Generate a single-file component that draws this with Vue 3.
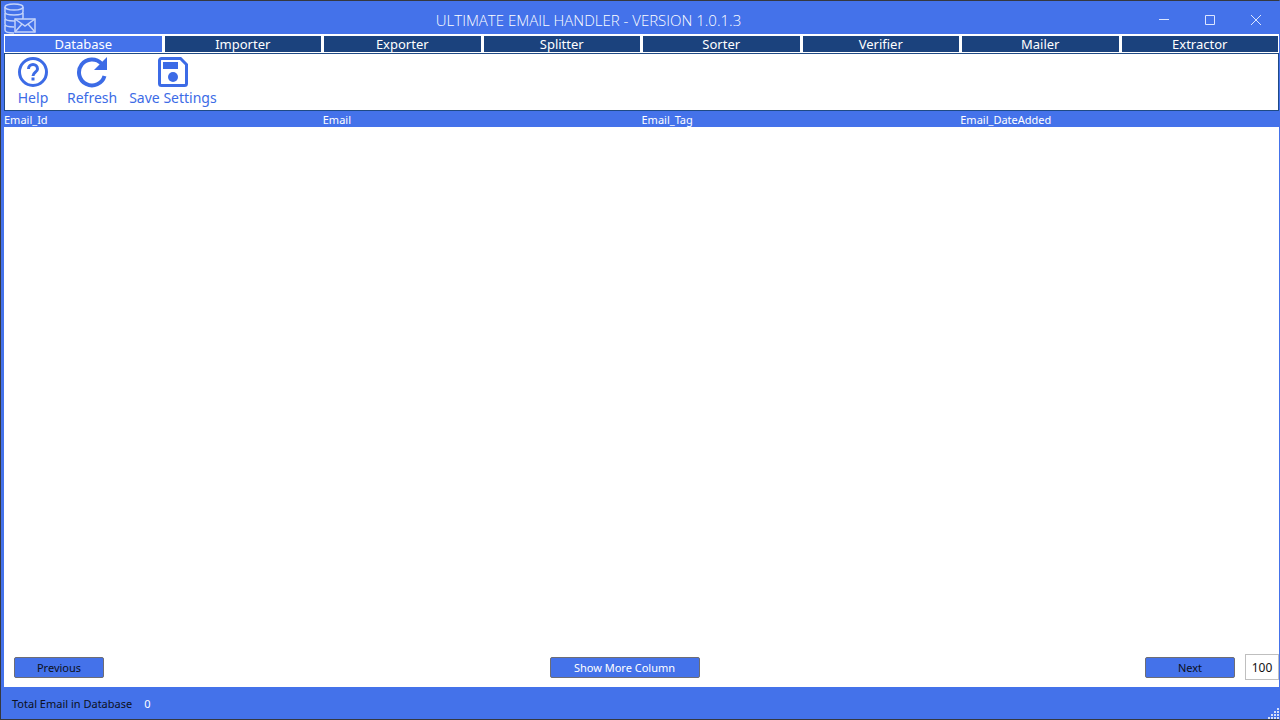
<template>
  <main class="window">
    <header class="title-bar">
      <svg class="app-logo" viewBox="0 0 32 32" aria-hidden="true">
        <ellipse cx="10" cy="5" rx="9" ry="3" />
        <path d="M1 5v5c0 4 18 4 18 0V5M1 11v5c0 4 18 4 18 0v-5M1 17v5c0 2 4 3 9 3M1 23v5c0 2 4 3 9 3" />
        <path class="envelope" d="M11 17h20v13H11z" />
        <path d="M11 17l10 7 10-7M11 30l7-8M31 30l-7-8" />
      </svg>
      <h1>ULTIMATE EMAIL HANDLER - VERSION 1.0.1.3</h1>
      <div class="window-buttons">
        <button type="button" aria-label="Minimize">
          <svg viewBox="0 0 12 12"><path d="M1 5.500h10" /></svg>
        </button>
        <button type="button" aria-label="Maximize">
          <svg viewBox="0 0 12 12"><path d="M1.500 1.500h9v9h-9z" /></svg>
        </button>
        <button type="button" aria-label="Close">
          <svg viewBox="0 0 12 12"><path d="M1 1l10 10M11 1L1 11" /></svg>
        </button>
      </div>
    </header>

    <nav class="tabs" aria-label="Sections">
      <button
        v-for="tab in tabs"
        :key="tab"
        type="button"
        :class="{ active: tab === activeTab }"
        @click="activeTab = tab"
      >
        {{ tab }}
      </button>
    </nav>

    <div class="toolbar">
      <button type="button">
        <svg viewBox="0 0 32 32" aria-hidden="true">
          <circle class="stroke" cx="16" cy="16" r="13.500" />
          <path class="stroke" d="M11.500 13c0-6 9-6 9 0 0 3-4.500 3.500-4.500 7" />
          <rect x="14.500" y="21.500" width="3" height="3" />
        </svg>
        <span>Help</span>
      </button>
      <button type="button">
        <svg viewBox="0 0 32 32" aria-hidden="true">
          <path class="stroke thick" d="M25.500 7.500A13 13 0 1 0 28.500 20" />
          <path d="M31 1v13H18z" />
        </svg>
        <span>Refresh</span>
      </button>
      <button type="button">
        <svg viewBox="0 0 32 32" aria-hidden="true">
          <path class="stroke" d="M4.500 2.500h19l6 6v19a2 2 0 0 1-2 2h-23a2 2 0 0 1-2-2v-23a2 2 0 0 1 2-2z" />
          <rect x="6" y="6" width="15" height="7" />
          <circle cx="16" cy="21" r="5" />
        </svg>
        <span>Save Settings</span>
      </button>
    </div>

    <section class="content" aria-label="Emails">
      <table>
        <thead>
          <tr>
            <th v-for="column in columns" :key="column" scope="col">{{ column }}</th>
          </tr>
        </thead>
        <tbody></tbody>
      </table>

      <div class="pager">
        <div class="pager-buttons">
          <button type="button">Previous</button>
          <button type="button" class="more">Show More Column</button>
          <button type="button">Next</button>
        </div>
        <input v-model="pageSize" type="text" aria-label="Rows per page" />
      </div>
    </section>

    <footer class="status-bar">
      <span>Total Email in Database</span>
      <output>{{ total }}</output>
      <svg class="grip" viewBox="0 0 11 11" aria-hidden="true">
        <rect v-for="dot in gripDots" :key="dot.id" :x="dot.x" :y="dot.y" width="2" height="2" />
      </svg>
    </footer>
  </main>
</template>

<script setup>
import { ref } from 'vue'

const tabs = ['Database', 'Importer', 'Exporter', 'Splitter', 'Sorter', 'Verifier', 'Mailer', 'Extractor']
const columns = ['Email_Id', 'Email', 'Email_Tag', 'Email_DateAdded']

const activeTab = ref('Database')
const pageSize = ref('100')
const total = ref(0)

// triangle of dots, one more on each row down
const gripDots = []
for (let row = 0; row < 4; row++) {
  for (let col = 3 - row; col < 4; col++) {
    gripDots.push({ id: `${row}-${col}`, x: col * 3, y: row * 3 })
  }
}
</script>

<style>
body {
  margin: 0;
  background: #4472ea;
}
</style>

<style scoped>
.window {
  display: flex;
  flex-direction: column;
  box-sizing: border-box;
  min-height: 100vh;
  border: 1px solid #35383f;
  border-right-color: #4472ea;
  background: #4472ea;
  color: #fff;
  font-family: 'Noto Sans', 'Open Sans', sans-serif;
  font-size: 11px;
}

button {
  padding: 0;
  border: 0;
  background: none;
  color: inherit;
  font: inherit;
}

.title-bar {
  display: flex;
  align-items: center;
  height: 33px;
  padding-left: 3px;
}

.app-logo {
  width: 32px;
  height: 32px;
  fill: none;
  stroke: #c3d3fa;
  stroke-width: 1.5;
}

.app-logo .envelope {
  fill: #4472ea;
}

h1 {
  flex: 1;
  margin: 0;
  padding-top: 4px;
  font-family: 'Open Sans', 'Noto Sans', sans-serif;
  font-size: 15px;
  font-weight: 300;
  line-height: 20px;
  text-align: center;
}

.window-buttons {
  display: flex;
  padding-top: 4px;
}

.window-buttons button {
  display: flex;
  align-items: center;
  justify-content: center;
  width: 46px;
  height: 28px;
}

.window-buttons svg {
  width: 12px;
  height: 12px;
  fill: none;
  stroke: #dde6ff;
}

.tabs {
  display: flex;
  gap: 3px;
  margin-left: 3px;
  padding: 2px 1px 1px;
  background: #fff;
}

.tabs button {
  flex: 1;
  height: 16px;
  background: #1b427d;
  font-size: 13px;
  line-height: 16px;
}

.tabs button.active {
  background: #4472ea;
}

.toolbar {
  display: flex;
  gap: 12px;
  height: 56px;
  margin-left: 3px;
  padding-left: 12px;
  border: 1px solid #1f4a85;
  background: #fff;
  color: #3c6be6;
}

.toolbar button {
  display: flex;
  flex-direction: column;
  align-items: center;
  min-width: 32px;
  padding-top: 2px;
  font-size: 14px;
  line-height: 20px;
}

.toolbar button:first-child {
  margin-right: 6px;
}

.toolbar svg {
  width: 32px;
  height: 32px;
  fill: currentColor;
}

.toolbar .stroke {
  fill: none;
  stroke: currentColor;
  stroke-width: 3;
}

.toolbar .thick {
  stroke-width: 4;
}

.content {
  display: flex;
  flex: 1;
  flex-direction: column;
  justify-content: space-between;
  margin-left: 3px;
  background: #fff;
}

table {
  width: 100%;
  table-layout: fixed;
  border-collapse: collapse;
  background: #4472ea;
}

th {
  padding: 1px 0 0;
  font-weight: 400;
  line-height: 15px;
  text-align: left;
}

.pager {
  display: flex;
  align-items: center;
  gap: 10px;
  padding: 0 0 7px 10px;
  color: #0c1020;
}

.pager-buttons {
  display: flex;
  flex: 1;
  justify-content: space-between;
}

.pager button {
  box-sizing: border-box;
  width: 90px;
  height: 21px;
  border: 1px solid #6d6d75;
  border-radius: 2px;
  background: #4472ea;
  line-height: 19px;
}

.pager .more {
  width: 150px;
  color: #fff;
}

.pager input {
  box-sizing: border-box;
  width: 34px;
  height: 26px;
  padding: 0;
  border: 1px solid #bfbfbf;
  color: #111;
  font: inherit;
  font-size: 12px;
  text-align: center;
}

.status-bar {
  display: flex;
  align-items: center;
  gap: 12px;
  height: 32px;
  padding-left: 11px;
  color: #0c1020;
}

.status-bar output {
  color: #fff;
}

.grip {
  align-self: flex-end;
  width: 11px;
  height: 11px;
  margin-left: auto;
  fill: #d5dffa;
}
</style>
